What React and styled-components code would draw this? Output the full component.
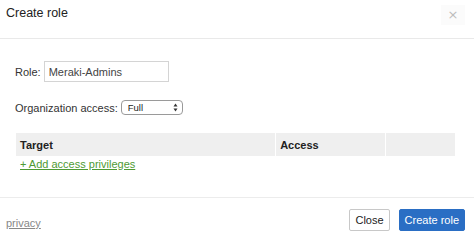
import React from "react";
import styled, { createGlobalStyle } from "styled-components";

const GlobalStyle = createGlobalStyle`
  html, body {
    margin: 0;
    padding: 0;
    background: #fff;
  }
  body {
    font-family: "Liberation Sans", Arial, Helvetica, sans-serif;
    font-size: 11px;
    color: #333;
  }
`;

const App = () => {
  return (
    <Modal>
      <GlobalStyle />
      <Header>
        <Title>Create role</Title>
        <CloseX aria-label="close">×</CloseX>
      </Header>
      <Body>
        <FieldRow>
          <Label>Role:</Label>
          <TextInput defaultValue="Meraki-Admins" />
        </FieldRow>
        <FieldRow $top={18}>
          <Label>Organization access:</Label>
          <SelectWrap>
            <Select defaultValue="Full">
              <option>Full</option>
              <option>Read-only</option>
              <option>None</option>
            </Select>
            <Arrows>
              <svg width="5" height="9" viewBox="0 0 5 9">
                <path d="M2.5 0.5 L4.5 3.5 L0.5 3.5 Z" fill="#333" />
                <path d="M2.5 8.5 L4.5 5.5 L0.5 5.5 Z" fill="#333" />
              </svg>
            </Arrows>
          </SelectWrap>
        </FieldRow>
        <Table>
          <thead>
            <tr>
              <Th $w={260}>Target</Th>
              <Th $w={110}>Access</Th>
              <Th $w={70}></Th>
            </tr>
          </thead>
        </Table>
        <AddLink href="#">+ Add access privileges</AddLink>
      </Body>
      <Footer>
        <Privacy href="#">privacy</Privacy>
        <Buttons>
          <Button>Close</Button>
          <Button $primary>Create role</Button>
        </Buttons>
      </Footer>
    </Modal>
  );
};

export default App;

const Modal = styled.div`
  width: 474px;
  height: 240px;
  display: flex;
  flex-direction: column;
  background: #fff;
`;

const Header = styled.div`
  height: 39px;
  border-bottom: 1px solid #e9e9e9;
  display: flex;
  justify-content: space-between;
  align-items: flex-start;
  padding: 6px 9px 0 6px;
  box-sizing: border-box;
`;

const Title = styled.div`
  font-size: 12.5px;
  line-height: 15px;
  color: #222;
`;

const CloseX = styled.button`
  width: 24px;
  height: 20px;
  margin-top: -1px;
  border: none;
  background: #fbfbfb;
  color: #bdbdbd;
  font-size: 13px;
  line-height: 20px;
  padding: 0;
  font-family: "DejaVu Sans", sans-serif;
`;

const Body = styled.div`
  flex: 1;
  padding: 22px 18px 0 15px;
  display: flex;
  flex-direction: column;
  align-items: flex-start;
`;

const FieldRow = styled.div`
  display: flex;
  align-items: center;
  gap: 3px;
  margin-top: ${(p) => p.$top || 0}px;
`;

const Label = styled.label`
  color: #333;
  font-size: 11px;
`;

const TextInput = styled.input`
  width: 125px;
  height: 21px;
  box-sizing: border-box;
  border: 1px solid #d4d4d4;
  padding: 0 4px;
  font-family: "Liberation Sans", Arial, sans-serif;
  font-size: 11px;
  color: #444;
  outline: none;
`;

const SelectWrap = styled.div`
  position: relative;
  display: flex;
`;

const Select = styled.select`
  appearance: none;
  width: 62px;
  height: 15px;
  box-sizing: border-box;
  border: 1px solid #9a9a9a;
  border-radius: 4px;
  background: #fff;
  font-family: "Liberation Sans", Arial, sans-serif;
  font-size: 9.5px;
  line-height: 13px;
  padding: 0 0 0 6px;
  color: #222;
  outline: none;
`;

const Arrows = styled.span`
  position: absolute;
  right: 5px;
  top: 3px;
  display: flex;
  pointer-events: none;
`;

const Table = styled.table`
  margin-top: 18px;
  margin-left: 1px;
  border-collapse: collapse;
  width: 440px;
`;

const Th = styled.th`
  width: ${(p) => p.$w}px;
  height: 23px;
  padding: 0 4px;
  background: #efefef;
  border-right: 1px solid #fff;
  text-align: left;
  font-size: 11px;
  font-weight: bold;
  color: #222;
  box-sizing: border-box;
`;

const AddLink = styled.a`
  margin-top: 2px;
  margin-left: 5px;
  color: #4e9a33;
  font-size: 11px;
  line-height: 13px;
  text-decoration: underline;
`;

const Footer = styled.div`
  height: 42px;
  border-top: 1px solid #ececec;
  display: flex;
  justify-content: space-between;
  align-items: center;
  padding: 0 9px 0 6px;
`;

const Privacy = styled.a`
  color: #888;
  font-size: 11px;
  padding-top: 8px;
  text-decoration: underline;
`;

const Buttons = styled.div`
  display: flex;
  gap: 9px;
  margin-top: 2px;
`;

const Button = styled.button`
  height: 22px;
  padding: 0 5px;
  box-sizing: border-box;
  border-radius: 2px;
  font-family: "Liberation Sans", Arial, sans-serif;
  font-size: 11px;
  border: 1px solid ${(p) => (p.$primary ? "#2a6ec4" : "#c8c8c8")};
  background: ${(p) => (p.$primary ? "#2a6ec4" : "#fff")};
  color: ${(p) => (p.$primary ? "#fff" : "#222")};
`;
